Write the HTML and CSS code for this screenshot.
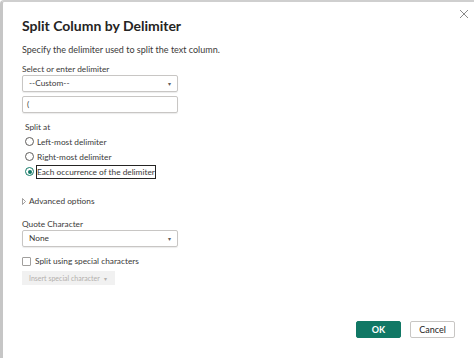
FILE: index.html
```html
<!DOCTYPE html>
<html>
<head>
  <title>Split Column by Delimiter</title>
  <link rel="stylesheet" href="styles.css">
</head>
<body>
  <div class="dialog">
    <button class="close-btn" aria-label="Close">
      <svg width="10" height="10" viewBox="0 0 10 10"><path d="M1 1L9 9M9 1L1 9" stroke="#8a8a8a" stroke-width="1"/></svg>
    </button>
    <h2 class="title">Split Column by Delimiter</h2>
    <p class="desc">Specify the delimiter used to split the text column.</p>

    <div class="label">Select or enter delimiter</div>
    <div class="select">
      <span>--Custom--</span>
      <span class="caret">&#9662;</span>
    </div>
    <div class="text-input">(</div>

    <div class="split-at">
      <div class="group-label">Split at</div>
      <div class="radio-row"><span class="radio"></span><span>Left-most delimiter</span></div>
      <div class="radio-row"><span class="radio"></span><span>Right-most delimiter</span></div>
      <div class="radio-row"><span class="radio checked"></span><span class="focused">Each occurrence of the delimiter</span></div>
    </div>

    <div class="advanced">
      <svg class="tri" width="4" height="7" viewBox="0 0 4 7"><path d="M0.5 0.5L3.5 3.5L0.5 6.5Z" fill="none" stroke="#8a8886" stroke-width="0.8"/></svg>
      <span>Advanced options</span>
    </div>

    <div class="label quote">Quote Character</div>
    <div class="select">
      <span>None</span>
      <span class="caret">&#9662;</span>
    </div>

    <div class="check-row"><span class="checkbox"></span><span>Split using special characters</span></div>
    <div class="disabled-btn">Insert special character <span class="caret">&#9662;</span></div>

    <div class="footer">
      <button class="ok-btn">OK</button>
      <button class="cancel-btn">Cancel</button>
    </div>
  </div>
</body>
</html>
```

FILE: styles.css
```css
html, body {
  margin: 0;
  height: 100%;
  overflow: hidden;
  background: #ffffff;
}
body {
  font-family: Lato, "Open Sans", sans-serif;
  color: #252423;
}
.dialog {
  position: relative;
  box-sizing: border-box;
  height: 100%;
  width: 100%;
  border-left: 3px solid #c6c6c6;
  border-top: 2px solid #cfcfcf;
  border-top-left-radius: 4px;
  padding: 0 0 0 19px;
}
.close-btn {
  position: absolute;
  top: 5px;
  left: 456px;
  border: none;
  background: none;
  padding: 0;
  width: 10px;
  height: 10px;
}
.title {
  margin: 0;
  padding-top: 14px;
  font-size: 14px;
  font-weight: 700;
  line-height: 20px;
}
.desc {
  margin: 7px 0 0 0;
  font-size: 9px;
  line-height: 14px;
  color: #3b3a39;
}
.label {
  margin-top: 6px;
  font-size: 8.3px;
  line-height: 12px;
  color: #3b3a39;
}
.select, .text-input {
  box-sizing: border-box;
  width: 156px;
  height: 17px;
  border: 1px solid #c8c6c4;
  border-radius: 2px;
  box-shadow: 0 1px 1px rgba(0,0,0,0.08);
  font-size: 8.3px;
  line-height: 15px;
  padding: 0 6px;
  color: #3b3a39;
  display: flex;
  justify-content: space-between;
}
.text-input {
  margin-top: 4px;
  padding-left: 4px;
}
.caret {
  font-size: 6px;
  color: #605e5c;
}
.split-at {
  margin-top: 7px;
  padding-left: 3px;
  font-size: 8.3px;
  color: #3b3a39;
}
.group-label {
  line-height: 14px;
}
.radio-row {
  display: flex;
  align-items: center;
  height: 15px;
  gap: 3px;
}
.radio {
  box-sizing: border-box;
  width: 9px;
  height: 9px;
  border: 1px solid #605e5c;
  border-radius: 50%;
  position: relative;
}
.radio.checked {
  border-color: #117865;
}
.radio.checked::after {
  content: "";
  position: absolute;
  left: 1.5px;
  top: 1.5px;
  width: 4px;
  height: 4px;
  border-radius: 50%;
  background: #117865;
}
.focused {
  outline: 1px solid #252423;
  line-height: 12px;
}
.advanced {
  margin-top: 15px;
  display: flex;
  align-items: center;
  gap: 3px;
  font-size: 8.3px;
  line-height: 14px;
  color: #3b3a39;
}
.label.quote {
  margin-top: 10px;
}
.check-row {
  margin-top: 8px;
  display: flex;
  align-items: center;
  gap: 4px;
  font-size: 8.3px;
  line-height: 12px;
  color: #3b3a39;
}
.checkbox {
  box-sizing: border-box;
  width: 9px;
  height: 9px;
  border: 1px solid #a19f9d;
  border-radius: 1px;
}
.disabled-btn {
  margin-top: 4px;
  width: 93px;
  height: 14px;
  box-sizing: border-box;
  background: #f1f1f1;
  color: #b3b0ad;
  font-size: 7px;
  line-height: 14px;
  padding-left: 7px;
}
.disabled-btn .caret {
  color: #b3b0ad;
  margin-left: 3px;
}
.footer {
  position: absolute;
  left: 353px;
  top: 319px;
  display: flex;
  gap: 9px;
}
.ok-btn, .cancel-btn {
  box-sizing: border-box;
  width: 45px;
  height: 17px;
  border-radius: 2px;
  font-family: Lato, "Open Sans", sans-serif;
  font-size: 9px;
  font-weight: 700;
  padding: 0;
}
.ok-btn {
  background: #117865;
  border: 1px solid #117865;
  color: #ffffff;
}
.cancel-btn {
  background: #ffffff;
  border: 1px solid #c8c6c4;
  color: #252423;
  font-weight: 400;
}
```
